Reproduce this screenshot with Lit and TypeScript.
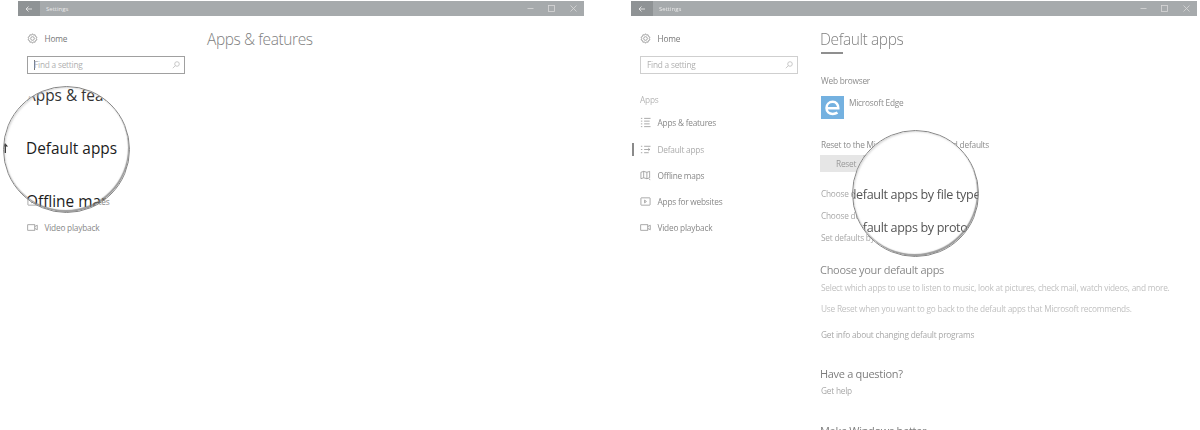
import { LitElement, html, css, svg } from "lit";
import { customElement, property } from "lit/decorators.js";

const icon = (body: unknown, size = 11) => html`<svg class="ico" width=${size} height=${size} viewBox="0 0 12 12" fill="none" stroke="currentColor" stroke-width="0.8">${body}</svg>`;

const icons = {
  gear: icon(svg`<circle cx="6" cy="6" r="2"/><path d="M6 .8l1 1.500 1.800-.4.4 1.800 1.700.9-.8 1.400.8 1.500-1.700.8-.4 1.800-1.800-.4-1 1.500-1-1.500-1.800.4-.4-1.800-1.700-.8.8-1.500-.8-1.400 1.700-.9.4-1.800 1.800.4z"/>`),
  list: icon(svg`<path d="M1 1.500h1.500M1 4.500h1.500M1 7.500h1.500M1 10.500h1.500M4.500 1.500h7M4.500 4.500h6M4.500 7.500h6M4.500 10.500h7"/>`),
  defaults: icon(svg`<path d="M1 2.500h1.500M1 6h1.500M1 9.500h1.500M4.500 2.500h7M4.500 9.500h5M4.500 6h6M9 4.500l1.700 1.500L9 7.500"/>`),
  map: icon(svg`<path d="M1 2.500l3-1 3.500 1 3-1v7l-3 1-3.500-1-3 1zM4 1.500v7M7.500 2.500v7M10 9.500l1 1.500"/>`),
  web: icon(svg`<rect x="1" y="2" width="10" height="8" rx=".5"/><path d="M5 4.500l2 1.500-2 1.500z"/>`),
  video: icon(svg`<rect x=".8" y="3" width="7.700" height="6"/><path d="M8.500 5l2.700-1.500v5L8.500 7"/>`),
};

const NAV = [
  { label: "Apps & features", ic: icons.list },
  { label: "Default apps", ic: icons.defaults },
  { label: "Offline maps", ic: icons.map },
  { label: "Apps for websites", ic: icons.web },
  { label: "Video playback", ic: icons.video },
];

@customElement("settings-window")
class SettingsWindow extends LitElement {
  @property() heading = "";
  @property({ type: Number }) selected = -1;
  @property({ type: Boolean }) focused = false;
  @property({ type: Boolean }) detail = false;

  static styles = css`
    :host { display: block; width: 566px; height: 430px; overflow: hidden; background: #fff; letter-spacing: -0.22px; }
    .bar { margin-top: 1px; height: 15px; background: #a6aaac; display: flex; align-items: center; color: #e9e9e9; font-size: 6px; letter-spacing: 0; }
    .back { width: 22px; height: 100%; background: #8f9395; display: flex; align-items: center; justify-content: center; margin-right: 6px; }
    .title { flex: 1; }
    .ctl { width: 21.500px; display: flex; justify-content: center; }
    .body { display: flex; }
    .side { width: 189px; flex: none; padding-top: 13px; }
    .home { box-sizing: border-box; height: 20px; padding-bottom: 0.500px; margin-left: 9px; display: flex; align-items: center; color: #777; font-size: 8.300px; }
    .home .ico { margin-right: 6.500px; color: #888; }
    .search { box-sizing: border-box; margin: 7px 0 0 9px; width: 158px; height: 18px; border: 1px solid #cfcfcf; display: flex; align-items: center; padding: 0 4px 0.500px 6px; color: #b0b0b0; font-size: 8.300px; justify-content: space-between; }
    .search.focused { border: 1.500px solid #a0a0a0; }
    .search .txt { display: flex; align-items: center; }
    .caret { width: 1px; height: 10px; background: #777; margin-right: -1px; }
    .section { height: 20px; margin: 16px 0 0 9px; line-height: 20px; color: #b5b5b5; font-size: 8.300px; }
    .item { box-sizing: border-box; height: 26.250px; padding: 0 0 0.500px 1px; display: flex; align-items: center; color: #888; font-size: 8.300px; }
    .item.sel { color: #ababab; }
    .mark { width: 2px; height: 13px; margin-right: 6px; }
    .sel .mark { background: #8a8a8a; }
    .item .ico { margin-right: 6.500px; color: #8c8c8c; }
    .main { padding-top: 11px; flex: 1; min-width: 0; }
    h1 { margin: 0; font-size: 15.500px; line-height: 24px; font-weight: 300; color: #808080; letter-spacing: -0.4px; }
    .rule { width: 22px; height: 2px; margin: 1px 0 0 1px; background: #8f8f8f; }
    .t { height: 14px; line-height: 14px; font-size: 8.300px; white-space: nowrap; color: #a8a8a8; margin-left: 1px; }
    .dark { color: #8c8c8c; }
    .pale { color: #c0c0c0; }
    h2 { margin: 0; height: 18px; line-height: 18px; font-size: 11px; font-weight: 400; color: #8a8a8a; white-space: nowrap; letter-spacing: -0.3px; }
    .edge { margin: 8px 0 0 1px; display: flex; height: 23px; gap: 5px; }
    .edge .name { margin-top: 1px; line-height: 12px; font-size: 8.300px; color: #8c8c8c; }
    .btn { margin: 3px 0 0 0; width: 55px; height: 17px; background: linear-gradient(to right, #e6e6e6 78%, #cfcfcf 78%); color: #999; font-size: 8.300px; display: flex; align-items: center; padding-left: 16px; box-sizing: border-box; }
  `;

  render() {
    return html`
      <div class="bar">
        <div class="back"><svg width="8" height="8" viewBox="0 0 8 8" fill="none" stroke="#eee" stroke-width=".8"><path d="M7 4H1M3.500 1.500L1 4l2.500 2.500"/></svg></div>
        <div class="title">Settings</div>
        <div class="ctl"><svg width="7" height="7" viewBox="0 0 7 7" stroke="#d8d8d8" fill="none" stroke-width=".8"><path d="M.5 3.500h6"/></svg></div>
        <div class="ctl"><svg width="7" height="7" viewBox="0 0 7 7" stroke="#d8d8d8" fill="none" stroke-width=".8"><rect x=".5" y=".5" width="6" height="6"/></svg></div>
        <div class="ctl"><svg width="7" height="7" viewBox="0 0 7 7" stroke="#d8d8d8" fill="none" stroke-width=".8"><path d="M.5.5l6 6M6.500.5l-6 6"/></svg></div>
      </div>
      <div class="body">
        <div class="side">
          <div class="home">${icons.gear}Home</div>
          <div class="search ${this.focused ? "focused" : ""}">
            <span class="txt">${this.focused ? html`<span class="caret"></span>` : ""}Find a setting</span>
            <svg width="8" height="8" viewBox="0 0 8 8" fill="none" stroke="#bbb" stroke-width=".8"><circle cx="5" cy="3" r="2.300"/><path d="M3.300 4.700L.8 7.200"/></svg>
          </div>
          <div class="section">Apps</div>
          ${NAV.map((n, i) => html`<div class="item ${i === this.selected ? "sel" : ""}"><span class="mark"></span>${n.ic}${n.label}</div>`)}
        </div>
        <div class="main">
          <h1>${this.heading}</h1>
          ${this.detail ? this.renderDetail() : ""}
        </div>
      </div>`;
  }

  renderDetail() {
    return html`
      <div class="rule"></div>
      <div class="t dark" style="margin-top:20px">Web browser</div>
      <div class="edge">
        <svg width="23" height="23" viewBox="0 0 23 23"><rect width="23" height="23" fill="#74b1e0"/><path d="M5.500 12.300h11.800c.2-4-2.300-6.500-5.600-6.500-3.600 0-6.200 2.700-6.200 6.200 0 3.600 2.600 5.900 6.200 5.900 1.900 0 3.500-.5 4.800-1.300" fill="none" stroke="#fff" stroke-width="2.500"/></svg>
        <div class="name">Microsoft Edge</div>
      </div>
      <div class="t dark" style="margin-top:19px">Reset to the Microsoft recommended defaults</div>
      <div class="btn">Reset</div>
      <div class="t" style="margin-top:15px">Choose default apps by file type</div>
      <div class="t" style="margin-top:8px">Choose default apps by protocol</div>
      <div class="t" style="margin-top:8px">Set defaults by app</div>
      <h2 style="margin-top:16px">Choose your default apps</h2>
      <div class="t pale" style="margin-top:2px">Select which apps to use to listen to music, look at pictures, check mail, watch videos, and more.</div>
      <div class="t pale" style="margin-top:7px">Use Reset when you want to go back to the default apps that Microsoft recommends.</div>
      <div class="t" style="margin-top:12px">Get info about changing default programs</div>
      <h2 style="margin-top:23px;color:#7d7d7d">Have a question?</h2>
      <div class="t" style="margin-top:1px">Get help</div>
      <h2 style="margin-top:24px;color:#7d7d7d">Make Windows better.</h2>`;
  }
}

@customElement("app-root")
class AppRoot extends LitElement {
  static styles = css`
    :host { display: block; width: 1200px; height: 430px; overflow: hidden; background: #fff; font-family: "Open Sans", "Noto Sans", sans-serif; }
    .page { position: relative; display: flex; gap: 47px; padding-left: 18px; height: 430px; filter: blur(0.4px); }
    .lens { position: absolute; box-sizing: border-box; width: 127px; height: 127px; border-radius: 50%; background: #fff; overflow: hidden; border: 1px solid #868686; white-space: nowrap; }
    .lens::after { content: ""; position: absolute; inset: 0; border-radius: 50%; box-shadow: inset -1px -2px 1px rgba(120,120,120,.75), inset 1px 1px 2px rgba(190,190,190,.6); }
    .a { left: 3px; top: 86px; color: #1c1c1c; font-size: 15.400px; padding-left: 22px; }
    .a .row { height: 52.500px; display: flex; align-items: center; }
    .a .first { margin-top: -18px; margin-bottom: 1px; color: #333; }
    .cursor { position: absolute; left: -2px; top: 55px; }
    .b { left: 852px; top: 130px; color: #555; font-size: 12.600px; letter-spacing: -0.35px; }
    .b .row { height: 33px; display: flex; align-items: center; margin-left: -49px; }
    .b .first { margin-top: 47px; }
  `;

  render() {
    return html`
      <div class="page">
        <settings-window heading="Apps &amp; features" focused></settings-window>
        <settings-window heading="Default apps" selected="1" detail></settings-window>
        <div class="lens a">
          <svg class="cursor" width="8" height="12" viewBox="0 0 8 12" fill="#222"><path d="M3 1l3 3.500H4V11H2.500V4.500H1z"/></svg>
          <div class="row first">Apps &amp; features</div>
          <div class="row">Default apps</div>
          <div class="row">Offline maps</div>
        </div>
        <div class="lens b">
          <div class="row first">Choose default apps by file type</div>
          <div class="row">Choose default apps by protocol</div>
        </div>
      </div>`;
  }
}
